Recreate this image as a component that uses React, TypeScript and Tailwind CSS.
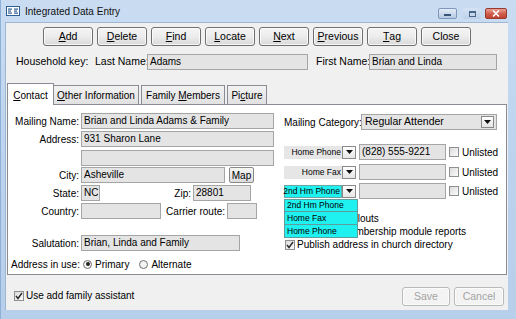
import React from "react";

type C = { children?: React.ReactNode };

function Btn({ children, w = "w-[50px]", disabled = false }: C & { w?: string; disabled?: boolean }) {
  return (
    <div
      className={`${w} h-[19px] rounded-[3px] border flex items-center justify-center text-[10.5px] leading-none shadow-[inset_0_0_0_1px_rgba(255,255,255,0.75)] ${
        disabled
          ? "border-[#b9b9b9] bg-[#f3f3f3] text-[#a3a3a3]"
          : "border-[#707070] bg-gradient-to-b from-[#f5f5f5] via-[#ececec] to-[#d9d9d9] text-black"
      }`}
    >
      {children}
    </div>
  );
}

function Field({ w, children }: C & { w: string }) {
  return (
    <div
      className={`${w} h-[16px] shrink-0 border border-[#a5a5a5] bg-[#e4e4e4] px-[2px] flex items-center text-[10px] leading-none whitespace-nowrap overflow-hidden text-black`}
    >
      {children}
    </div>
  );
}

function Check({ checked = false }: { checked?: boolean }) {
  return (
    <div className="w-[10px] h-[10px] shrink-0 border border-[#8e8f8f] bg-gradient-to-br from-[#dcdcdc] to-[#fbfbfb] flex items-center justify-center">
      {checked && (
        <svg width="8" height="8" viewBox="0 0 8 8">
          <path d="M1 4 L3 6.5 L7 1" fill="none" stroke="#2a2a2a" strokeWidth="1.4" />
        </svg>
      )}
    </div>
  );
}

function Radio({ checked = false }: { checked?: boolean }) {
  return (
    <div className="w-[9px] h-[9px] shrink-0 rounded-full border border-[#6f6f6f] bg-[#f4f4f4] flex items-center justify-center">
      {checked && <div className="w-[4px] h-[4px] rounded-full bg-[#222]" />}
    </div>
  );
}

function Arrow() {
  return (
    <svg width="7" height="4" viewBox="0 0 7 4">
      <path d="M0 0 H7 L3.5 4 Z" fill="#111" />
    </svg>
  );
}

function DropBtn() {
  return (
    <div className="w-[14px] h-[13px] shrink-0 border border-[#8a8a8a] bg-gradient-to-b from-white to-[#e6e6e6] flex items-center justify-center">
      <Arrow />
    </div>
  );
}

function PhoneRow({ label, value, cyan = false, children }: C & { label: string; value?: string; cyan?: boolean }) {
  return (
    <div className="relative flex items-center h-[16px]">
      <div
        className={`w-[58px] h-[13px] shrink-0 flex items-center justify-end pr-[1px] text-[8.5px] leading-none whitespace-nowrap ${
          cyan ? "bg-[#1ff0f0] border border-[#6aa6a6]" : "bg-[#e6e6e6]"
        }`}
      >
        {label}
      </div>
      <DropBtn />
      <div className="ml-[3px]">
        <Field w="w-[87px]">{value}</Field>
      </div>
      <div className="ml-[3px]">
        <Check />
      </div>
      <span className="ml-[3px] text-[10px]">Unlisted</span>
      {children}
    </div>
  );
}

function Row({ label, children, mt }: C & { label: string; mt: string }) {
  return (
    <div className={`flex items-center h-[16px] ${mt}`}>
      <div className="w-[73px] shrink-0 pr-[2px] text-right whitespace-nowrap">{label}</div>
      {children}
    </div>
  );
}

export default function App() {
  return (
    <div className="w-[516px] h-[319px] overflow-hidden bg-gradient-to-b from-[#c9dcf2] via-[#bcd3ee] to-[#b7cfeb] font-['Liberation_Sans',Arial,sans-serif] text-black flex flex-col border-l border-[#8fb0d6]">
      {/* Title bar */}
      <div className="h-[22px] flex items-center shrink-0">
        <div className="ml-[5px]">
          <svg width="14" height="10" viewBox="0 0 14 10">
            <rect x="0.5" y="0.5" width="13" height="9" fill="#fff" stroke="#2f5f94" />
            <rect x="2" y="2.5" width="4" height="1.2" fill="#2f5f94" />
            <rect x="2" y="4.5" width="3" height="1.2" fill="#2f5f94" />
            <rect x="2" y="6.5" width="4" height="1.2" fill="#2f5f94" />
            <rect x="8" y="2.5" width="4" height="1.2" fill="#2f5f94" />
            <rect x="8" y="4.5" width="3" height="1.2" fill="#2f5f94" />
            <rect x="8" y="6.5" width="4" height="1.2" fill="#2f5f94" />
          </svg>
        </div>
        <span className="ml-[5px] text-[10px] text-[#111]">Integrated Data Entry</span>
        <div className="ml-auto flex items-start self-start mt-[8px] mr-[9px]">
          <div className="w-[19px] h-[11px] rounded-[2px] border border-[#7d98bb] bg-gradient-to-b from-[#e3ecf7] to-[#b4c9e2] flex items-end justify-center pb-[2px]">
            <div className="w-[7px] h-[2px] bg-[#39547a]" />
          </div>
          <div className="ml-[6px] w-[18px] h-[11px] rounded-[2px] bg-gradient-to-b from-[#d5e3f3] to-[#bcd0e8] flex items-center justify-center">
            <div className="w-[7px] h-[6px] border border-[#4a6488] border-t-2" />
          </div>
          <div className="ml-[4px] w-[22px] h-[11px] rounded-[2px] border border-[#9a3a2e] bg-gradient-to-b from-[#e8a093] via-[#d0614f] to-[#c0402e] flex items-center justify-center">
            <svg width="8" height="7" viewBox="0 0 8 7">
              <path d="M1 0.5 L7 6.5 M7 0.5 L1 6.5" stroke="#fff" strokeWidth="1.6" />
            </svg>
          </div>
        </div>
      </div>

      {/* Body */}
      <div className="pl-[4px] pr-[8px]">
        <div className="h-[288px] bg-[#f0f0f0] flex flex-col text-[10px] border-l border-t border-[#9fb6d2]">
          {/* Toolbar */}
          <div className="flex gap-[4px] pl-[37px] pt-[4px]">
            <Btn><span className="underline">A</span>dd</Btn>
            <Btn><span className="underline">D</span>elete</Btn>
            <Btn><span className="underline">F</span>ind</Btn>
            <Btn><span className="underline">L</span>ocate</Btn>
            <Btn><span className="underline">N</span>ext</Btn>
            <Btn><span className="underline">P</span>revious</Btn>
            <Btn><span className="underline">T</span>ag</Btn>
            <Btn>Close</Btn>
          </div>

          {/* Household row */}
          <div className="flex items-center h-[16px] mt-[8px] pl-[10px] text-[10.5px]">
            <span className="w-[79px] shrink-0 whitespace-nowrap">Household key:</span>
            <span className="w-[52px] shrink-0 whitespace-nowrap">Last Name:</span>
            <Field w="w-[161px]">Adams</Field>
            <span className="ml-[8px] w-[53px] shrink-0 whitespace-nowrap">First Name:</span>
            <Field w="w-[128px]">Brian and Linda</Field>
          </div>

          {/* Tabs */}
          <div className="flex items-end mt-[13px] pl-[1px] text-[10px]">
            <div className="relative z-10 -mb-[1px] w-[47px] h-[22px] bg-white border border-b-0 border-[#898c95] flex items-start pt-[4px] justify-center">
              <span><span className="underline">C</span>ontact</span>
            </div>
            <div className="w-[85px] h-[19px] bg-gradient-to-b from-[#f2f2f2] to-[#e1e1e1] border border-b-0 border-l-0 border-[#898c95] flex items-center justify-center">
              <span><span className="underline">O</span>ther Information</span>
            </div>
            <div className="ml-[2px] w-[84px] h-[19px] bg-gradient-to-b from-[#f2f2f2] to-[#e1e1e1] border border-b-0 border-[#898c95] flex items-center justify-center">
              <span>Family <span className="underline">M</span>embers</span>
            </div>
            <div className="ml-[2px] w-[40px] h-[19px] bg-gradient-to-b from-[#f2f2f2] to-[#e1e1e1] border border-b-0 border-[#898c95] flex items-center justify-center">
              <span>Pi<span className="underline">c</span>ture</span>
            </div>
          </div>

          {/* Panel */}
          <div className="ml-[1px] w-[500px] h-[171px] border border-[#898c95] bg-white flex pt-[8px]">
            {/* Left column */}
            <div className="w-[266px] shrink-0 flex flex-col">
              <Row label="Mailing Name:" mt="mt-0">
                <Field w="w-[193px]">Brian and Linda Adams &amp; Family</Field>
              </Row>
              <Row label="Address:" mt="mt-[2px]">
                <Field w="w-[193px]">931 Sharon Lane</Field>
              </Row>
              <Row label="" mt="mt-[3px]">
                <Field w="w-[193px]">{""}</Field>
              </Row>
              <Row label="City:" mt="mt-[1px]">
                <Field w="w-[144px]">Asheville</Field>
                <div className="ml-[4px] w-[25px] h-[16px] rounded-[2px] border border-[#8a8a8a] bg-gradient-to-b from-[#f6f6f6] to-[#dcdcdc] flex items-center justify-center text-[10px]">
                  Map
                </div>
              </Row>
              <Row label="State:" mt="mt-[2px]">
                <Field w="w-[19px]">NC</Field>
                <div className="w-[93px] shrink-0 pr-[2px] text-right">Zip:</div>
                <Field w="w-[58px]">28801</Field>
              </Row>
              <Row label="Country:" mt="mt-[2px]">
                <Field w="w-[80px]">{""}</Field>
                <div className="w-[66px] shrink-0 pr-[2px] text-right whitespace-nowrap">Carrier route:</div>
                <Field w="w-[30px]">{""}</Field>
              </Row>
              <Row label="Salutation:" mt="mt-[16px]">
                <Field w="w-[159px]">Brian, Linda and Family</Field>
              </Row>
              <div className="flex items-center h-[12px] mt-[7px] pl-[3px]">
                <span className="w-[72px] shrink-0 whitespace-nowrap">Address in use:</span>
                <Radio checked />
                <span className="ml-[3px]">Primary</span>
                <div className="ml-[10px]">
                  <Radio />
                </div>
                <span className="ml-[3px]">Alternate</span>
              </div>
            </div>

            {/* Right column */}
            <div className="ml-[10px] flex flex-col pt-[1px]">
              <div className="flex items-center h-[16px]">
                <span className="w-[77px] shrink-0 whitespace-nowrap">Mailing Category:</span>
                <div className="w-[136px] h-[16px] border border-[#a5a5a5] bg-[#e4e4e4] flex items-center pl-[3px] pr-[2px]">
                  <span className="text-[10.5px]">Regular Attender</span>
                  <div className="ml-auto w-[13px] h-[12px] border border-[#8a8a8a] bg-gradient-to-b from-white to-[#e4e4e4] flex items-center justify-center">
                    <Arrow />
                  </div>
                </div>
              </div>

              <div className="mt-[14px]">
                <PhoneRow label="Home Phone" value="(828) 555-9221" />
              </div>
              <div className="mt-[4px]">
                <PhoneRow label="Home Fax" />
              </div>
              <div className="mt-[3px] relative z-20">
                <PhoneRow label="2nd Hm Phone" cyan>
                  <div className="absolute left-0 top-[16px] w-[74px] flex flex-col text-[8.5px] leading-none">
                    <div className="h-[13px] bg-[#1ff0f0] border border-[#5f9c9c] flex items-center pl-[2px]">2nd Hm Phone</div>
                    <div className="h-[13px] bg-[#1ff0f0] border border-t-0 border-[#5f9c9c] flex items-center pl-[2px]">Home Fax</div>
                    <div className="h-[13px] bg-[#1ff0f0] border border-t-0 border-[#5f9c9c] flex items-center pl-[2px]">Home Phone</div>
                  </div>
                </PhoneRow>
              </div>

              <div className="mt-[13px] flex flex-col pl-[1px]">
                <div className="flex items-center h-[13px]">
                  <Check />
                  <span className="ml-[1px] whitespace-nowrap">Include on callouts</span>
                </div>
                <div className="flex items-center h-[13px]">
                  <Check />
                  <span className="ml-[1px] whitespace-nowrap">Include in membership module reports</span>
                </div>
                <div className="flex items-center h-[13px]">
                  <Check checked />
                  <span className="ml-[2px] whitespace-nowrap">Publish address in church directory</span>
                </div>
              </div>
            </div>
          </div>

          {/* Bottom */}
          <div className="flex items-start mt-[12px] pl-[8px] pr-[4px]">
            <div className="flex items-center mt-[1px]">
              <Check checked />
              <span className="ml-[2px] text-[10px]">Use add family assistant</span>
            </div>
            <div className="ml-auto flex gap-[4px]">
              <Btn w="w-[48px]" disabled>Save</Btn>
              <Btn w="w-[50px]" disabled>Cancel</Btn>
            </div>
          </div>
        </div>
      </div>
    </div>
  );
}
